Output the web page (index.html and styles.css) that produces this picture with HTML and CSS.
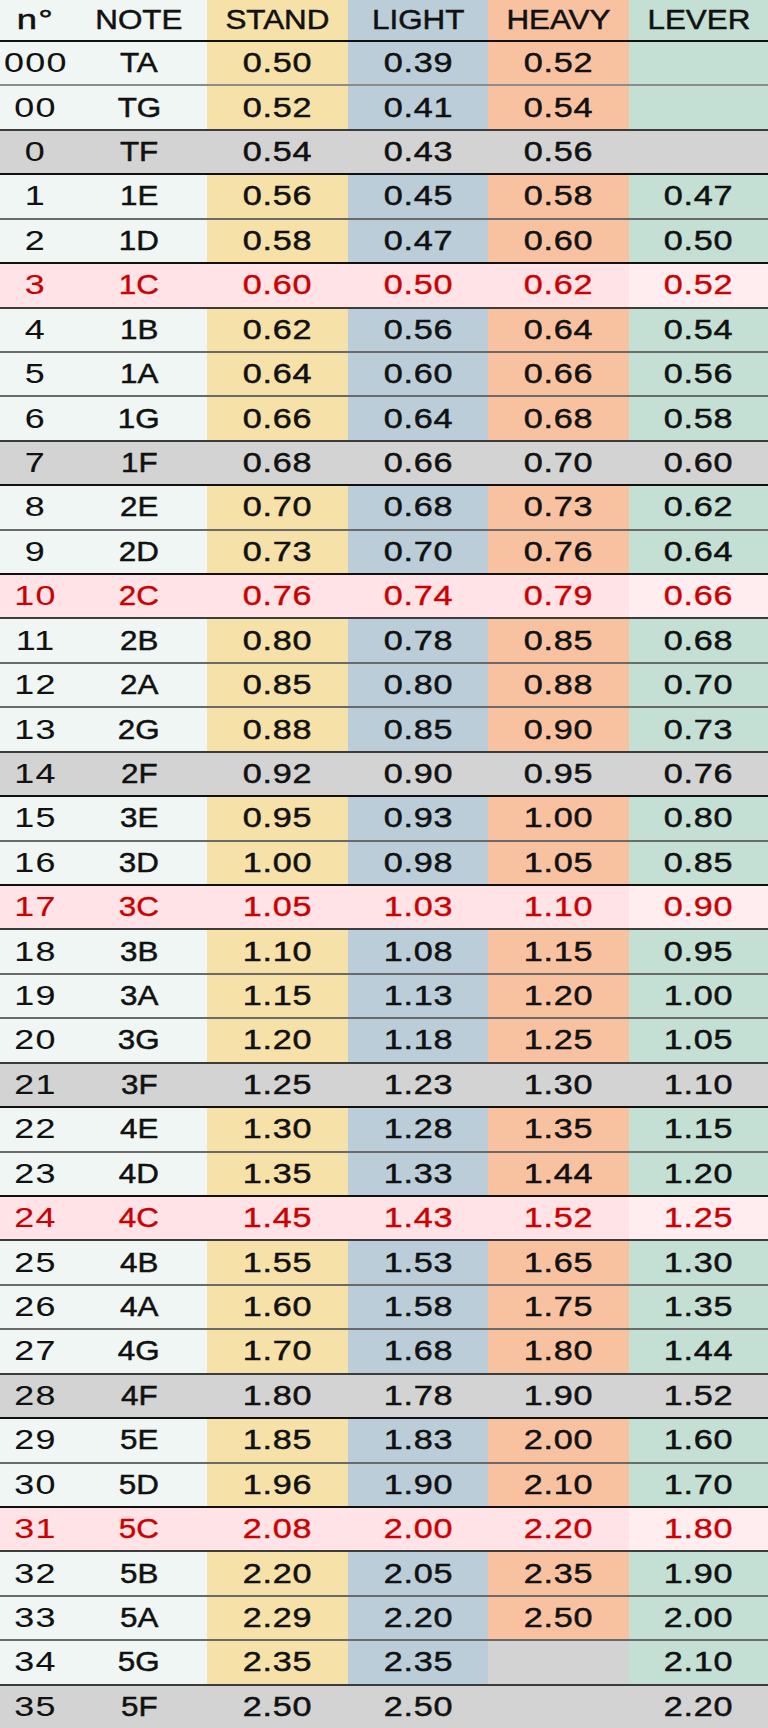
FILE: index.html
```html
<!DOCTYPE html>
<html lang="en">
<head>
<meta charset="utf-8">
<title>Gauge chart</title>
<link rel="stylesheet" href="styles.css">
</head>
<body>
<div class="table">
  <div class="row head"><div class="c n"><span>n°</span></div><div class="c note"><span>NOTE</span></div><div class="c st"><span>STAND</span></div><div class="c li"><span>LIGHT</span></div><div class="c he"><span>HEAVY</span></div><div class="c le"><span>LEVER</span></div></div>
  <div class="row first"><div class="c n"><span>000</span></div><div class="c note"><span>TA</span></div><div class="c st"><span>0.50</span></div><div class="c li"><span>0.39</span></div><div class="c he"><span>0.52</span></div><div class="c le"></div></div>
  <div class="row light"><div class="c n"><span>00</span></div><div class="c note"><span>TG</span></div><div class="c st"><span>0.52</span></div><div class="c li"><span>0.41</span></div><div class="c he"><span>0.54</span></div><div class="c le"></div></div>
  <div class="row gray"><div class="c n"><span>0</span></div><div class="c note"><span>TF</span></div><div class="c st"><span>0.54</span></div><div class="c li"><span>0.43</span></div><div class="c he"><span>0.56</span></div><div class="c le"></div></div>
  <div class="row after-gray"><div class="c n"><span>1</span></div><div class="c note"><span>1E</span></div><div class="c st"><span>0.56</span></div><div class="c li"><span>0.45</span></div><div class="c he"><span>0.58</span></div><div class="c le"><span>0.47</span></div></div>
  <div class="row"><div class="c n"><span>2</span></div><div class="c note"><span>1D</span></div><div class="c st"><span>0.58</span></div><div class="c li"><span>0.47</span></div><div class="c he"><span>0.60</span></div><div class="c le"><span>0.50</span></div></div>
  <div class="row red"><div class="c n"><span>3</span></div><div class="c note"><span>1C</span></div><div class="c st"><span>0.60</span></div><div class="c li"><span>0.50</span></div><div class="c he"><span>0.62</span></div><div class="c le"><span>0.52</span></div></div>
  <div class="row after-red"><div class="c n"><span>4</span></div><div class="c note"><span>1B</span></div><div class="c st"><span>0.62</span></div><div class="c li"><span>0.56</span></div><div class="c he"><span>0.64</span></div><div class="c le"><span>0.54</span></div></div>
  <div class="row"><div class="c n"><span>5</span></div><div class="c note"><span>1A</span></div><div class="c st"><span>0.64</span></div><div class="c li"><span>0.60</span></div><div class="c he"><span>0.66</span></div><div class="c le"><span>0.56</span></div></div>
  <div class="row"><div class="c n"><span>6</span></div><div class="c note"><span>1G</span></div><div class="c st"><span>0.66</span></div><div class="c li"><span>0.64</span></div><div class="c he"><span>0.68</span></div><div class="c le"><span>0.58</span></div></div>
  <div class="row gray"><div class="c n"><span>7</span></div><div class="c note"><span>1F</span></div><div class="c st"><span>0.68</span></div><div class="c li"><span>0.66</span></div><div class="c he"><span>0.70</span></div><div class="c le"><span>0.60</span></div></div>
  <div class="row after-gray"><div class="c n"><span>8</span></div><div class="c note"><span>2E</span></div><div class="c st"><span>0.70</span></div><div class="c li"><span>0.68</span></div><div class="c he"><span>0.73</span></div><div class="c le"><span>0.62</span></div></div>
  <div class="row"><div class="c n"><span>9</span></div><div class="c note"><span>2D</span></div><div class="c st"><span>0.73</span></div><div class="c li"><span>0.70</span></div><div class="c he"><span>0.76</span></div><div class="c le"><span>0.64</span></div></div>
  <div class="row red"><div class="c n"><span>10</span></div><div class="c note"><span>2C</span></div><div class="c st"><span>0.76</span></div><div class="c li"><span>0.74</span></div><div class="c he"><span>0.79</span></div><div class="c le"><span>0.66</span></div></div>
  <div class="row after-red"><div class="c n"><span>11</span></div><div class="c note"><span>2B</span></div><div class="c st"><span>0.80</span></div><div class="c li"><span>0.78</span></div><div class="c he"><span>0.85</span></div><div class="c le"><span>0.68</span></div></div>
  <div class="row"><div class="c n"><span>12</span></div><div class="c note"><span>2A</span></div><div class="c st"><span>0.85</span></div><div class="c li"><span>0.80</span></div><div class="c he"><span>0.88</span></div><div class="c le"><span>0.70</span></div></div>
  <div class="row"><div class="c n"><span>13</span></div><div class="c note"><span>2G</span></div><div class="c st"><span>0.88</span></div><div class="c li"><span>0.85</span></div><div class="c he"><span>0.90</span></div><div class="c le"><span>0.73</span></div></div>
  <div class="row gray"><div class="c n"><span>14</span></div><div class="c note"><span>2F</span></div><div class="c st"><span>0.92</span></div><div class="c li"><span>0.90</span></div><div class="c he"><span>0.95</span></div><div class="c le"><span>0.76</span></div></div>
  <div class="row after-gray"><div class="c n"><span>15</span></div><div class="c note"><span>3E</span></div><div class="c st"><span>0.95</span></div><div class="c li"><span>0.93</span></div><div class="c he"><span>1.00</span></div><div class="c le"><span>0.80</span></div></div>
  <div class="row"><div class="c n"><span>16</span></div><div class="c note"><span>3D</span></div><div class="c st"><span>1.00</span></div><div class="c li"><span>0.98</span></div><div class="c he"><span>1.05</span></div><div class="c le"><span>0.85</span></div></div>
  <div class="row red"><div class="c n"><span>17</span></div><div class="c note"><span>3C</span></div><div class="c st"><span>1.05</span></div><div class="c li"><span>1.03</span></div><div class="c he"><span>1.10</span></div><div class="c le"><span>0.90</span></div></div>
  <div class="row after-red"><div class="c n"><span>18</span></div><div class="c note"><span>3B</span></div><div class="c st"><span>1.10</span></div><div class="c li"><span>1.08</span></div><div class="c he"><span>1.15</span></div><div class="c le"><span>0.95</span></div></div>
  <div class="row"><div class="c n"><span>19</span></div><div class="c note"><span>3A</span></div><div class="c st"><span>1.15</span></div><div class="c li"><span>1.13</span></div><div class="c he"><span>1.20</span></div><div class="c le"><span>1.00</span></div></div>
  <div class="row"><div class="c n"><span>20</span></div><div class="c note"><span>3G</span></div><div class="c st"><span>1.20</span></div><div class="c li"><span>1.18</span></div><div class="c he"><span>1.25</span></div><div class="c le"><span>1.05</span></div></div>
  <div class="row gray"><div class="c n"><span>21</span></div><div class="c note"><span>3F</span></div><div class="c st"><span>1.25</span></div><div class="c li"><span>1.23</span></div><div class="c he"><span>1.30</span></div><div class="c le"><span>1.10</span></div></div>
  <div class="row after-gray"><div class="c n"><span>22</span></div><div class="c note"><span>4E</span></div><div class="c st"><span>1.30</span></div><div class="c li"><span>1.28</span></div><div class="c he"><span>1.35</span></div><div class="c le"><span>1.15</span></div></div>
  <div class="row"><div class="c n"><span>23</span></div><div class="c note"><span>4D</span></div><div class="c st"><span>1.35</span></div><div class="c li"><span>1.33</span></div><div class="c he"><span>1.44</span></div><div class="c le"><span>1.20</span></div></div>
  <div class="row red"><div class="c n"><span>24</span></div><div class="c note"><span>4C</span></div><div class="c st"><span>1.45</span></div><div class="c li"><span>1.43</span></div><div class="c he"><span>1.52</span></div><div class="c le"><span>1.25</span></div></div>
  <div class="row after-red"><div class="c n"><span>25</span></div><div class="c note"><span>4B</span></div><div class="c st"><span>1.55</span></div><div class="c li"><span>1.53</span></div><div class="c he"><span>1.65</span></div><div class="c le"><span>1.30</span></div></div>
  <div class="row"><div class="c n"><span>26</span></div><div class="c note"><span>4A</span></div><div class="c st"><span>1.60</span></div><div class="c li"><span>1.58</span></div><div class="c he"><span>1.75</span></div><div class="c le"><span>1.35</span></div></div>
  <div class="row"><div class="c n"><span>27</span></div><div class="c note"><span>4G</span></div><div class="c st"><span>1.70</span></div><div class="c li"><span>1.68</span></div><div class="c he"><span>1.80</span></div><div class="c le"><span>1.44</span></div></div>
  <div class="row gray"><div class="c n"><span>28</span></div><div class="c note"><span>4F</span></div><div class="c st"><span>1.80</span></div><div class="c li"><span>1.78</span></div><div class="c he"><span>1.90</span></div><div class="c le"><span>1.52</span></div></div>
  <div class="row after-gray"><div class="c n"><span>29</span></div><div class="c note"><span>5E</span></div><div class="c st"><span>1.85</span></div><div class="c li"><span>1.83</span></div><div class="c he"><span>2.00</span></div><div class="c le"><span>1.60</span></div></div>
  <div class="row"><div class="c n"><span>30</span></div><div class="c note"><span>5D</span></div><div class="c st"><span>1.96</span></div><div class="c li"><span>1.90</span></div><div class="c he"><span>2.10</span></div><div class="c le"><span>1.70</span></div></div>
  <div class="row red"><div class="c n"><span>31</span></div><div class="c note"><span>5C</span></div><div class="c st"><span>2.08</span></div><div class="c li"><span>2.00</span></div><div class="c he"><span>2.20</span></div><div class="c le"><span>1.80</span></div></div>
  <div class="row after-red"><div class="c n"><span>32</span></div><div class="c note"><span>5B</span></div><div class="c st"><span>2.20</span></div><div class="c li"><span>2.05</span></div><div class="c he"><span>2.35</span></div><div class="c le"><span>1.90</span></div></div>
  <div class="row"><div class="c n"><span>33</span></div><div class="c note"><span>5A</span></div><div class="c st"><span>2.29</span></div><div class="c li"><span>2.20</span></div><div class="c he"><span>2.50</span></div><div class="c le"><span>2.00</span></div></div>
  <div class="row"><div class="c n"><span>34</span></div><div class="c note"><span>5G</span></div><div class="c st"><span>2.35</span></div><div class="c li"><span>2.35</span></div><div class="c he empty"></div><div class="c le"><span>2.10</span></div></div>
  <div class="row gray"><div class="c n"><span>35</span></div><div class="c note"><span>5F</span></div><div class="c st"><span>2.50</span></div><div class="c li"><span>2.50</span></div><div class="c he"></div><div class="c le"><span>2.20</span></div></div>
</div>
</body>
</html>
```

FILE: styles.css
```css
html, body {
  margin: 0;
  padding: 0;
  background: #eff6f4;
}

.table {
  width: 768px;
  height: 1728px;
  display: flex;
  flex-direction: column;
  overflow: hidden;
  font-family: "Liberation Sans", Arial, sans-serif;
  font-size: 28px;
  color: #111;
}

.row {
  flex: 1 1 0;
  min-height: 0;
  display: grid;
  grid-template-columns: 71px 136px 141px 140px 141px 139px;
  border-top: 2px solid #6a6a6a;
  box-sizing: border-box;
}

.row.head {
  flex: 0 0 40px;
  border-top: none;
}

.row.first,
.row.after-gray,
.row.red {
  border-top-color: #111;
}

.row.light {
  border-top-color: #8c8c8c;
}

.row.gray,
.row.after-red {
  border-top-color: #3c3c3c;
}

.c {
  display: flex;
  align-items: center;
  justify-content: center;
  white-space: nowrap;
  -webkit-text-stroke: 0.5px #111;
}

.c span {
  display: inline-block;
  transform: scaleX(1.22);
  letter-spacing: 0.6px;
}

.c.note span,
.head .c span {
  transform: scaleX(1.12);
  letter-spacing: 0;
}

.c.n {
  -webkit-text-stroke: 0.1px #111;
}

.c.n span {
  transform: scaleX(1.28);
  letter-spacing: 1px;
}

.head .c.n {
  -webkit-text-stroke: 0.5px #111;
}

.head .c.n span {
  transform: scaleX(1.3);
  letter-spacing: 1px;
}

.n, .note { background: #eff6f4; }
.st { background: #f6e1a8; }
.li { background: #bacdd9; }
.he { background: #f8c2a0; }
.le { background: #c4dfd4; }
.he.empty { background: #d3d3d3; }

.row.gray .c {
  background: #d3d3d3;
}

.row.red .c {
  background: #ffe3e7;
  color: #cc0000;
  -webkit-text-stroke: 0.4px #cc0000;
}

.row.red .c.n {
  -webkit-text-stroke: 0.1px #cc0000;
}

.row.red .c.le {
  background: #ffedf0;
}
```
